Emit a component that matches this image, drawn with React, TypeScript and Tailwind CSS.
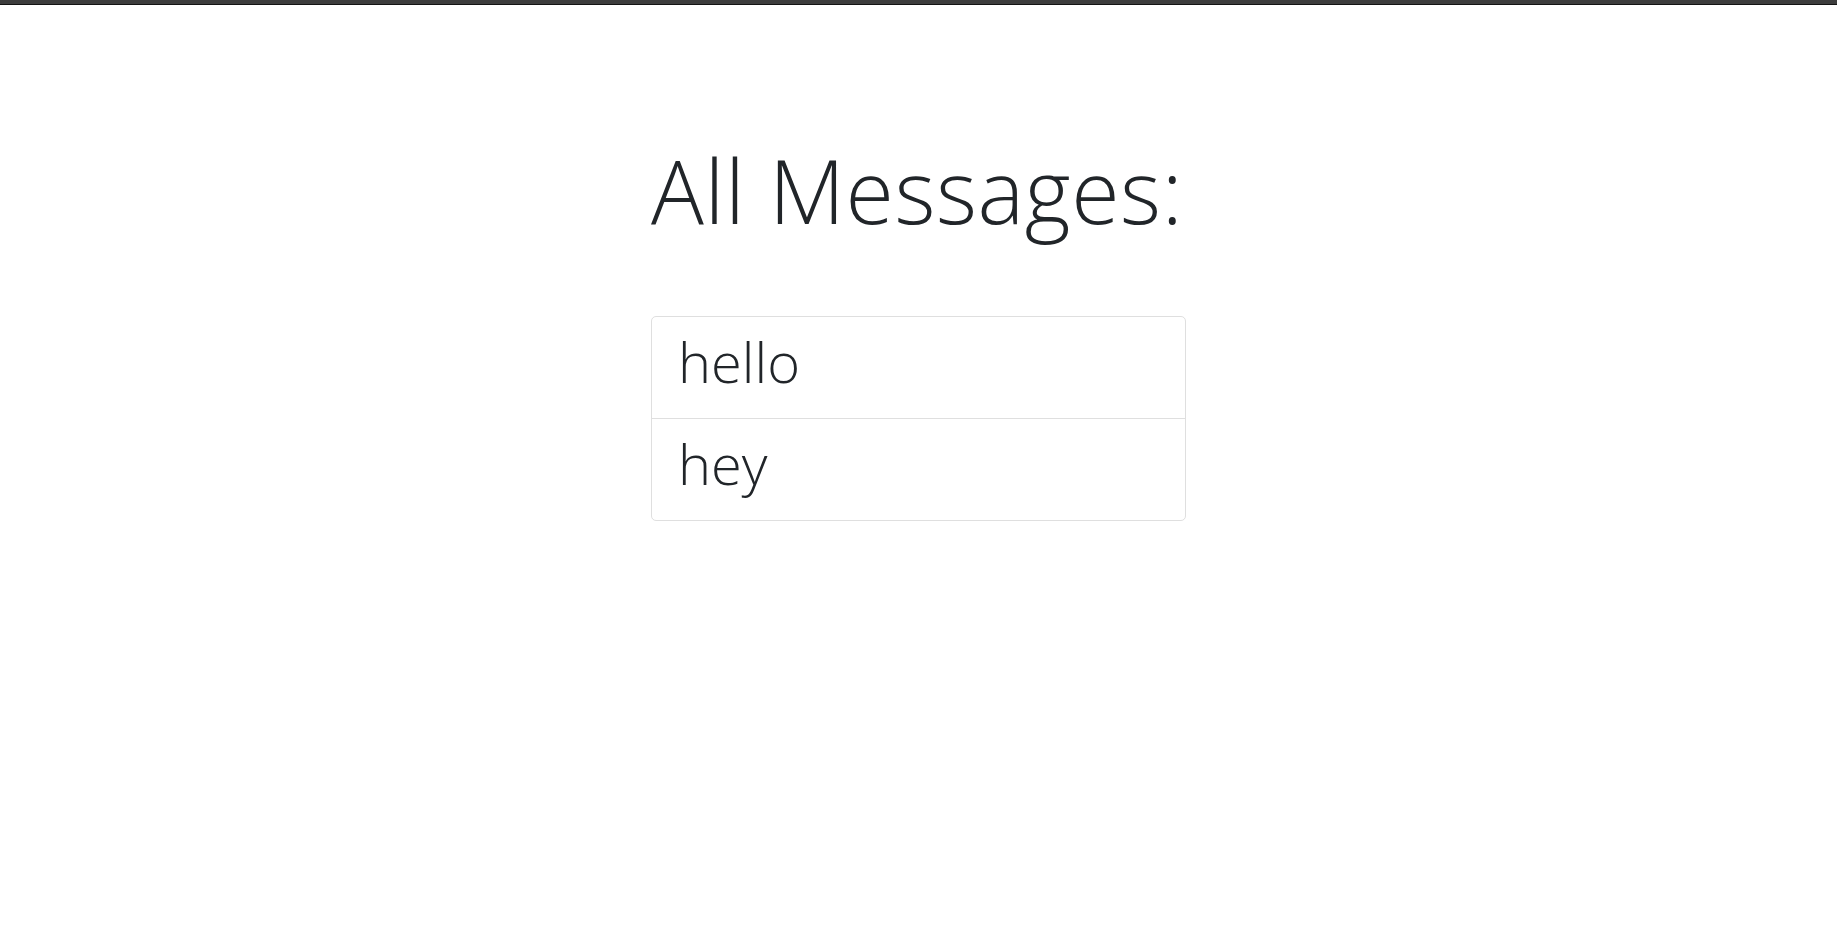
import React from "react";

export default function App() {
  return (
    <div className="min-h-screen bg-white text-[#212529]" style={{ fontFamily: '"Open Sans", "Noto Sans", sans-serif' }}>
      <div className="h-[5px] bg-[#3d3d3d] border-b border-[#141414]" />
      <div className="mx-auto w-[535px] pt-[133px]">
        <h1 className="text-[88px] font-light leading-[1.2] tracking-[0.6px]">All Messages:</h1>
        <ul className="mt-[72px] w-full rounded-[5px] border border-[#dfdfdf]">
          <li className="border-b border-[#dfdfdf] px-[26px] pt-[11px] pb-[23px] text-[56px] font-light leading-[1.2]">hello</li>
          <li className="px-[26px] pt-[11px] pb-[23px] text-[56px] font-light leading-[1.2]">hey</li>
        </ul>
      </div>
    </div>
  );
}
